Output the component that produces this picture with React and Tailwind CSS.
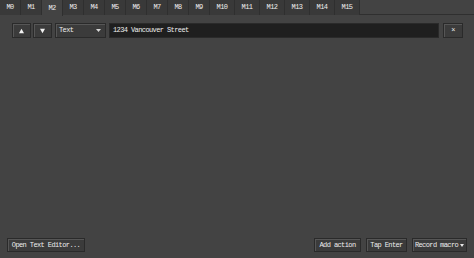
const TABS = Array.from({ length: 16 }, (_, i) => `M${i}`)

const Btn = ({ children, className = '' }) => (
  <button
    className={`h-[14px] px-[6px] flex items-center justify-center whitespace-nowrap bg-[#3b3b3b] border border-[#2a2a2a] shadow-[inset_1px_1px_0_#565656] text-[#ededed] ${className}`}
  >
    {children}
  </button>
)

const App = () => {
  return (
    <div
      className="w-[474px] h-[258px] bg-[#434343] flex flex-col text-[7px] tracking-[-0.6px] text-[#ededed] overflow-hidden"
      style={{ fontFamily: '"Liberation Mono", monospace' }}
    >
      {/* macro tabs */}
      <div className="h-[15px] flex border-b border-[#2f2f2f]">
        {TABS.map((t, i) => (
          <div
            key={t}
            className={`${i < 10 ? 'w-[21px]' : 'w-[25px]'} h-[15px] flex items-center justify-center border-r border-[#2f2f2f] ${
              i === 2 ? 'bg-[#434343] h-[16px]' : 'bg-[#393939]'
            }`}
          >
            {t}
          </div>
        ))}
      </div>

      {/* action row */}
      <div className="flex items-center pt-[8px] pl-[12px] pr-[11px] gap-[2px]">
        <Btn className="w-[19px] px-0 h-[15px]">
          <svg width="7" height="6" viewBox="0 0 7 6">
            <path d="M3.5 0L7 6H0z" fill="#f2f2f2" />
          </svg>
        </Btn>
        <Btn className="w-[19px] px-0 h-[15px]">
          <svg width="7" height="6" viewBox="0 0 7 6">
            <path d="M0 0H7L3.5 6z" fill="#f2f2f2" />
          </svg>
        </Btn>
        <div className="ml-[1px] w-[51px] h-[15px] flex items-center justify-between pl-[3px] pr-[4px] bg-[#3b3b3b] border border-[#2a2a2a] shadow-[inset_1px_1px_0_#565656]">
          <span>Text</span>
          <svg width="5" height="3" viewBox="0 0 5 3">
            <path d="M0 0H5L2.5 3z" fill="#d8d8d8" />
          </svg>
        </div>
        <div className="ml-[1px] flex-1 h-[15px] flex items-center px-[3px] bg-[#1f1f1f] border border-[#2a2a2a] whitespace-nowrap">
          1234 Vancouver Street
        </div>
        <Btn className="ml-[2px] w-[20px] px-0 h-[15px]">×</Btn>
      </div>

      <div className="flex-1" />

      {/* bottom buttons */}
      <div className="flex items-center pl-[7px] pr-[7px] pb-[6px]">
        <Btn className="w-[78px]">Open Text Editor...</Btn>
        <div className="flex-1" />
        <div className="flex gap-[5px]">
          <Btn className="w-[47px]">Add action</Btn>
          <Btn className="w-[41px]">Tap Enter</Btn>
          <Btn className="w-[55px] gap-[2px] px-[1px]">
            <span>Record macro</span>
            <svg width="4" height="3" viewBox="0 0 4 3" className="shrink-0">
              <path d="M0 0H4L2 3z" fill="#e6e6e6" />
            </svg>
          </Btn>
        </div>
      </div>
    </div>
  )
}

export default App
